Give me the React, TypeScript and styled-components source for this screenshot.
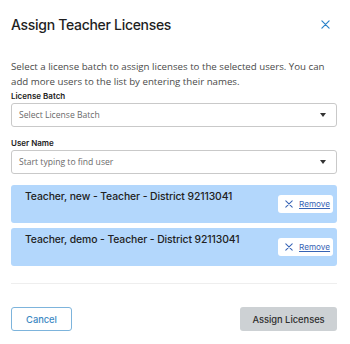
import React from 'react';
import styled, { createGlobalStyle } from 'styled-components';

const GlobalStyle = createGlobalStyle`
  body {
    margin: 0;
    background: #ffffff;
    font-family: "Open Sans", "Noto Sans", sans-serif;
  }
`;

const Dialog = styled.div`
  width: 350px;
  height: 344px;
  box-sizing: border-box;
  padding: 13px 13px 0 11px;
  display: flex;
  flex-direction: column;
`;

const Header = styled.div`
  display: flex;
  align-items: center;
  justify-content: space-between;
  height: 22px;
`;

const Title = styled.h1`
  margin: 0;
  font-family: Inter, sans-serif;
  font-size: 14px;
  font-weight: 500;
  color: #1f1f1f;
  letter-spacing: -0.3px;
`;

const CloseButton = styled.button`
  border: none;
  background: none;
  padding: 0;
  margin-right: 6px;
  width: 12px;
  height: 12px;
  display: flex;
  align-items: center;
  justify-content: center;
  cursor: pointer;
`;

const Description = styled.p`
  margin: 25px 0 0;
  font-size: 9.7px;
  line-height: 14.5px;
  color: #4a4a4a;
  white-space: nowrap;
`;

const Field = styled.div<{ $top: number }>`
  margin-top: ${p => p.$top}px;
  display: flex;
  flex-direction: column;
`;

const Label = styled.label`
  font-family: Inter, sans-serif;
  font-size: 8px;
  font-weight: 600;
  color: #222;
  line-height: 12px;
  margin-bottom: 1px;
`;

const SelectBox = styled.div`
  height: 24px;
  box-sizing: border-box;
  border: 1px solid #c9c9c9;
  border-radius: 3px;
  display: flex;
  align-items: center;
  justify-content: space-between;
  padding: 0 10px 0 7px;
  font-size: 8.6px;
  color: #6a6a6a;
`;

const Caret = styled.span`
  width: 0;
  height: 0;
  border-left: 3.5px solid transparent;
  border-right: 3.5px solid transparent;
  border-top: 4px solid #333;
`;

const CardList = styled.div`
  margin-top: 11px;
  display: flex;
  flex-direction: column;
  gap: 5px;
`;

const UserCard = styled.div`
  height: 38px;
  box-sizing: border-box;
  background: #b3d7fc;
  border-radius: 3px;
  display: flex;
  justify-content: space-between;
  padding: 6px 4px 0 14px;
`;

const UserName = styled.div`
  font-family: Inter, sans-serif;
  font-size: 10.4px;
  font-weight: 500;
  color: #222;
  line-height: 12px;
  letter-spacing: -0.1px;
`;

const RemoveButton = styled.button`
  align-self: center;
  margin-top: -6px;
  width: 55px;
  height: 18px;
  border: none;
  border-radius: 3px;
  background: #ffffff;
  display: flex;
  align-items: center;
  gap: 6px;
  padding: 0 0 0 7px;
  font-family: Inter, sans-serif;
  font-size: 8.2px;
  color: #3763b5;
  cursor: pointer;

  span {
    text-decoration: underline;
  }
`;

const Divider = styled.hr`
  margin: 17px 0 0;
  border: none;
  border-top: 1px solid #eeeeee;
`;

const Footer = styled.div`
  margin-top: 23px;
  display: flex;
  justify-content: space-between;
`;

const FooterButton = styled.button<{ $primary?: boolean }>`
  height: 24px;
  box-sizing: border-box;
  border-radius: 3px;
  font-family: Inter, sans-serif;
  font-size: 9.3px;
  font-weight: 500;
  cursor: pointer;
  padding: 0;
  width: ${p => (p.$primary ? '97px' : '61px')};
  border: ${p => (p.$primary ? 'none' : '1px solid #7db4dc')};
  background: ${p => (p.$primary ? '#cdd1d4' : '#ffffff')};
  color: ${p => (p.$primary ? '#2e2e2e' : '#3b88c3')};
`;

const XIcon = ({ size, color }: { size: number; color: string }) => (
  <svg width={size} height={size} viewBox="0 0 10 10" fill="none">
    <path d="M1 1L9 9M9 1L1 9" stroke={color} strokeWidth="1.3" strokeLinecap="round" />
  </svg>
);

const users = [
  'Teacher, new - Teacher - District 92113041',
  'Teacher, demo - Teacher - District 92113041',
];

export default function App() {
  return (
    <>
      <GlobalStyle />
      <Dialog>
        <Header>
          <Title>Assign Teacher Licenses</Title>
          <CloseButton aria-label="Close">
            <XIcon size={9} color="#2a82c9" />
          </CloseButton>
        </Header>
        <Description>
          Select a license batch to assign licenses to the selected users. You can
          <br />
          add more users to the list by entering their names.
        </Description>
        <Field $top={1}>
          <Label>License Batch</Label>
          <SelectBox>
            Select License Batch
            <Caret />
          </SelectBox>
        </Field>
        <Field $top={10}>
          <Label>User Name</Label>
          <SelectBox>
            Start typing to find user
            <Caret />
          </SelectBox>
        </Field>
        <CardList>
          {users.map(u => (
            <UserCard key={u}>
              <UserName>{u}</UserName>
              <RemoveButton>
                <XIcon size={8} color="#3763b5" />
                <span>Remove</span>
              </RemoveButton>
            </UserCard>
          ))}
        </CardList>
        <Divider />
        <Footer>
          <FooterButton>Cancel</FooterButton>
          <FooterButton $primary>Assign Licenses</FooterButton>
        </Footer>
      </Dialog>
    </>
  );
}
